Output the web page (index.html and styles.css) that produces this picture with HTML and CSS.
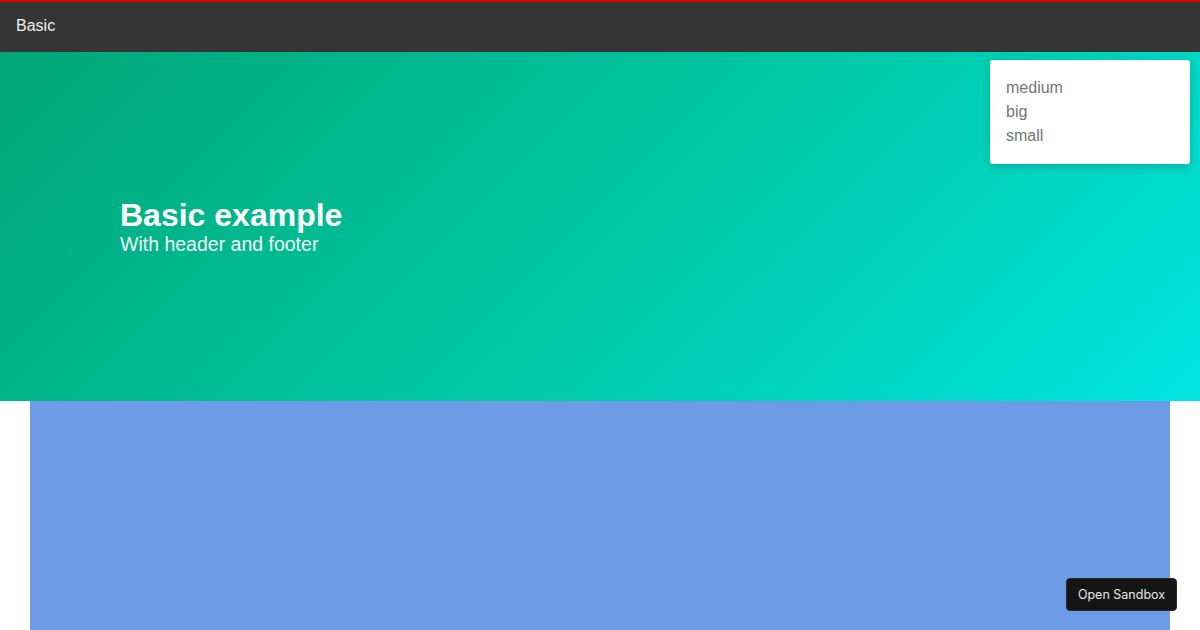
FILE: index.html
```html
<!DOCTYPE html>
<html>
<head>
<meta charset="utf-8">
<link rel="stylesheet" href="styles.css">
</head>
<body>
<header class="topbar">Basic</header>
<section class="hero">
  <div class="hero-text">
    <h1 class="title">Basic example</h1>
    <p class="subtitle">With header and footer</p>
  </div>
  <ul class="menu">
    <li>medium</li>
    <li>big</li>
    <li>small</li>
  </ul>
</section>
<main class="content"></main>
<button class="sandbox">Open Sandbox</button>
</body>
</html>
```

FILE: styles.css
```css
html, body {
  margin: 0;
  padding: 0;
  height: 100%;
  overflow: hidden;
  background: #ffffff;
  font-family: "Liberation Sans", Arial, sans-serif;
}
.topbar {
  box-sizing: border-box;
  height: 52px;
  border-top: 2px solid #e00000;
  background: #353535;
  color: #f0f0f0;
  font-size: 16px;
  line-height: 48px;
  padding-left: 16px;
}
.hero {
  position: relative;
  height: 349px;
  background: linear-gradient(135deg, #00a676, #00c6a2 50%, #00e5e0);
  display: flex;
  align-items: center;
  padding-left: 120px;
}
.hero-text {
  color: #ffffff;
  margin-top: 0;
}
.title {
  margin: 0;
  font-size: 32px;
  font-weight: bold;
  line-height: 34px;
}
.subtitle {
  margin: 0;
  font-size: 19.5px;
  line-height: 24px;
  color: #f2fbf8;
}
.menu {
  position: absolute;
  top: 8px;
  right: 10px;
  width: 200px;
  box-sizing: border-box;
  margin: 0;
  padding: 16px 16px 16px;
  list-style: none;
  background: #ffffff;
  border-radius: 3px;
  box-shadow: 0 3px 10px rgba(0, 0, 0, 0.18);
  color: #6f7777;
  font-size: 16px;
  line-height: 24px;
}
.content {
  display: block;
  height: 229px;
  margin: 0 30px;
  background: #6d9be6;
}
.sandbox {
  position: absolute;
  top: 578px;
  left: 1066px;
  width: 111px;
  height: 33px;
  border: 1px solid #2a2a2a;
  border-radius: 4px;
  background: #151515;
  color: #e8e8e8;
  font-family: Inter, "Liberation Sans", sans-serif;
  font-size: 12.5px;
  padding: 0;
}
```
